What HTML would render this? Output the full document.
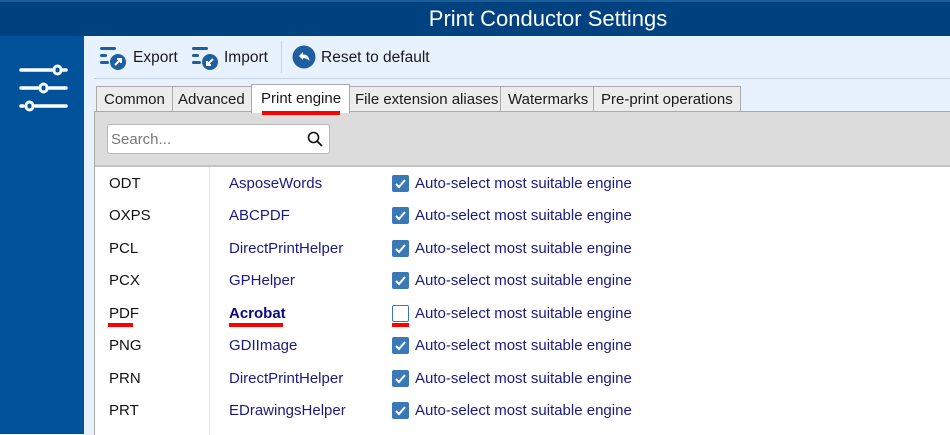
<!DOCTYPE html>
<html><head><style>
body{margin:0;width:950px;height:434px;overflow:hidden;font-family:"Liberation Sans",sans-serif;background:#e8f2fe;position:relative}
.title{position:absolute;left:0;top:0;width:950px;height:36px;background:#00427f;border-top:2px solid #1a5c99;box-sizing:border-box;color:#fff;font-size:22px;text-align:center;line-height:34px;padding-left:146px}
.side{position:absolute;left:0;top:36px;width:84px;height:398px;background:#00529b}
.tb{position:absolute;top:48px;font-size:15.5px;color:#1a1a1a;line-height:20px}
.sep{position:absolute;left:94px;top:78px;width:856px;height:1px;background:#c5d3e2}
.tab{position:absolute;top:86px;height:26px;box-sizing:border-box;border:1px solid #aaa;border-bottom:none;background:#ececec;font-size:15px;line-height:26px;padding:0 7px;color:#1a1a1a;white-space:nowrap;overflow:hidden}
.panel{position:absolute;left:94px;top:111px;width:856px;height:323px;border-left:1px solid #aaa;border-top:1px solid #aaa;background:#fff}
.grey{position:absolute;left:0;top:0;width:856px;height:53px;background:#dcdcdc;border-bottom:2px solid #c4c4c4}
.search{position:absolute;left:12px;top:12px;width:223px;height:30px;background:#fff;border:1px solid #b8b8b8;border-radius:3px;box-sizing:border-box;font-size:15px;color:#777;line-height:30px;padding-left:3px}
.div{position:absolute;left:114px;top:55px;width:1px;height:268px;background:#e4e4e4}
.r{position:absolute;font-size:15px;line-height:18px;white-space:nowrap}
.ext{color:#111}
.eng{color:#1a1a80}
.cb{position:absolute;width:17px;height:17px;border-radius:2px;background:#3a78b8;box-sizing:border-box}
.cb.off{background:#fff;border:1px solid #3a78b8}
.lbl{color:#1a1a80}
.red{position:absolute;height:4px;background:#f00}
</style></head><body>
<div class="title">Print Conductor Settings</div>
<div class="side">
<svg width="84" height="80" viewBox="0 0 84 80">
<g stroke="#fff" stroke-width="3.5" stroke-linecap="round" fill="none">
<line x1="21" y1="34" x2="52" y2="34"/><line x1="63" y1="34" x2="66" y2="34"/>
<line x1="21" y1="52" x2="38" y2="52"/><line x1="49" y1="52" x2="66" y2="52"/>
<line x1="21" y1="70" x2="23" y2="70"/><line x1="35" y1="70" x2="66" y2="70"/>
<rect x="54" y="30" width="7" height="8" rx="3.5" stroke-width="3"/>
<rect x="40" y="48" width="7" height="8" rx="3.5" stroke-width="3"/>
<rect x="26" y="66" width="7" height="8" rx="3.5" stroke-width="3"/>
</g></svg></div>
<svg style="position:absolute;left:99px;top:45px" width="30" height="26" viewBox="0 0 30 26"><g fill="#1d5fa0"><rect x="1" y="2" width="16" height="3" rx="1.5"/><rect x="1" y="9" width="7" height="3" rx="1.5"/><rect x="1" y="16" width="9" height="3" rx="1.5"/><circle cx="19" cy="17" r="8"/></g><path d="M16 20l6-6M18 14h4v4" stroke="#fff" stroke-width="2" fill="none"/></svg>
<div class="tb" style="left:133px">Export</div>
<svg style="position:absolute;left:191px;top:45px" width="30" height="26" viewBox="0 0 30 26"><g fill="#1d5fa0"><rect x="1" y="2" width="16" height="3" rx="1.5"/><rect x="1" y="9" width="7" height="3" rx="1.5"/><rect x="1" y="16" width="9" height="3" rx="1.5"/><circle cx="19" cy="17" r="8"/></g><path d="M22 14l-6 6M16 16v4h4" stroke="#fff" stroke-width="2" fill="none"/></svg>
<div class="tb" style="left:224px">Import</div>
<div style="position:absolute;left:281px;top:41px;width:1px;height:32px;background:#c5d3e2"></div>
<svg style="position:absolute;left:292px;top:45px" width="24" height="24" viewBox="0 0 24 24"><circle cx="12" cy="12" r="11.5" fill="#1d5fa0"/><path d="M7 11l4-4v2.5c4 0 6 2 6.5 6.5-1.5-2-3.5-2.8-6.5-2.8V15z" fill="#fff"/></svg>
<div class="tb" style="left:321px">Reset to default</div>
<div class="sep"></div>
<div class="tab" style="left:96px;width:77px">Common</div>
<div class="tab" style="left:172px;width:80px;padding:0 5px">Advanced</div>
<div class="tab" style="left:251px;width:99px;top:84px;height:29px;background:#fff;z-index:2;line-height:28px;padding:0 9px">Print engine</div>
<div class="tab" style="left:349px;width:152px;padding:0 5px">File extension aliases</div>
<div class="tab" style="left:500px;width:94px">Watermarks</div>
<div class="tab" style="left:593px;width:148px">Pre-print operations</div>
<div class="red" style="left:262px;top:111px;width:78px;z-index:3"></div>
<div class="panel">
<div class="grey"><div class="search">Search...<svg style="position:absolute;right:6px;top:6px" width="16" height="16" viewBox="0 0 16 16"><circle cx="6.5" cy="6.5" r="5" stroke="#111" stroke-width="1.6" fill="none"/><path d="M10 10l5 5" stroke="#111" stroke-width="1.8"/></svg></div></div>
<div class="div"></div>
</div>
<div class="r ext" style="left:109px;top:175px">ODT</div><div class="r eng" style="left:229px;top:175px">AsposeWords</div>
<div class="r ext" style="left:109px;top:207px">OXPS</div><div class="r eng" style="left:229px;top:207px">ABCPDF</div>
<div class="r ext" style="left:109px;top:240px">PCL</div><div class="r eng" style="left:229px;top:240px">DirectPrintHelper</div>
<div class="r ext" style="left:109px;top:272px">PCX</div><div class="r eng" style="left:229px;top:272px">GPHelper</div>
<div class="r ext" style="left:109px;top:305px">PDF</div><div class="r eng" style="left:229px;top:305px;font-weight:bold;color:#0a0a80">Acrobat</div>
<div class="r ext" style="left:109px;top:337px">PNG</div><div class="r eng" style="left:229px;top:337px">GDIImage</div>
<div class="r ext" style="left:109px;top:370px">PRN</div><div class="r eng" style="left:229px;top:370px">DirectPrintHelper</div>
<div class="r ext" style="left:109px;top:402px">PRT</div><div class="r eng" style="left:229px;top:402px">EDrawingsHelper</div>
<svg width="0" height="0" style="position:absolute"><defs><path id="ck" d="M4 9l3 3 6-7" stroke="#fff" stroke-width="2" fill="none"/></defs></svg>
<div class="cb" style="left:392px;top:175px"><svg width="17" height="17"><use href="#ck"/></svg></div><div class="r lbl" style="left:415px;top:175px">Auto-select most suitable engine</div>
<div class="cb" style="left:392px;top:207px"><svg width="17" height="17"><use href="#ck"/></svg></div><div class="r lbl" style="left:415px;top:207px">Auto-select most suitable engine</div>
<div class="cb" style="left:392px;top:240px"><svg width="17" height="17"><use href="#ck"/></svg></div><div class="r lbl" style="left:415px;top:240px">Auto-select most suitable engine</div>
<div class="cb" style="left:392px;top:272px"><svg width="17" height="17"><use href="#ck"/></svg></div><div class="r lbl" style="left:415px;top:272px">Auto-select most suitable engine</div>
<div class="cb off" style="left:392px;top:305px"></div><div class="r lbl" style="left:415px;top:305px">Auto-select most suitable engine</div>
<div class="cb" style="left:392px;top:337px"><svg width="17" height="17"><use href="#ck"/></svg></div><div class="r lbl" style="left:415px;top:337px">Auto-select most suitable engine</div>
<div class="cb" style="left:392px;top:370px"><svg width="17" height="17"><use href="#ck"/></svg></div><div class="r lbl" style="left:415px;top:370px">Auto-select most suitable engine</div>
<div class="cb" style="left:392px;top:402px"><svg width="17" height="17"><use href="#ck"/></svg></div><div class="r lbl" style="left:415px;top:402px">Auto-select most suitable engine</div>
<div class="red" style="left:108px;top:323px;width:25px"></div>
<div class="red" style="left:229px;top:323px;width:54px"></div>
<div class="red" style="left:392px;top:323px;width:17px"></div>
</body></html>
